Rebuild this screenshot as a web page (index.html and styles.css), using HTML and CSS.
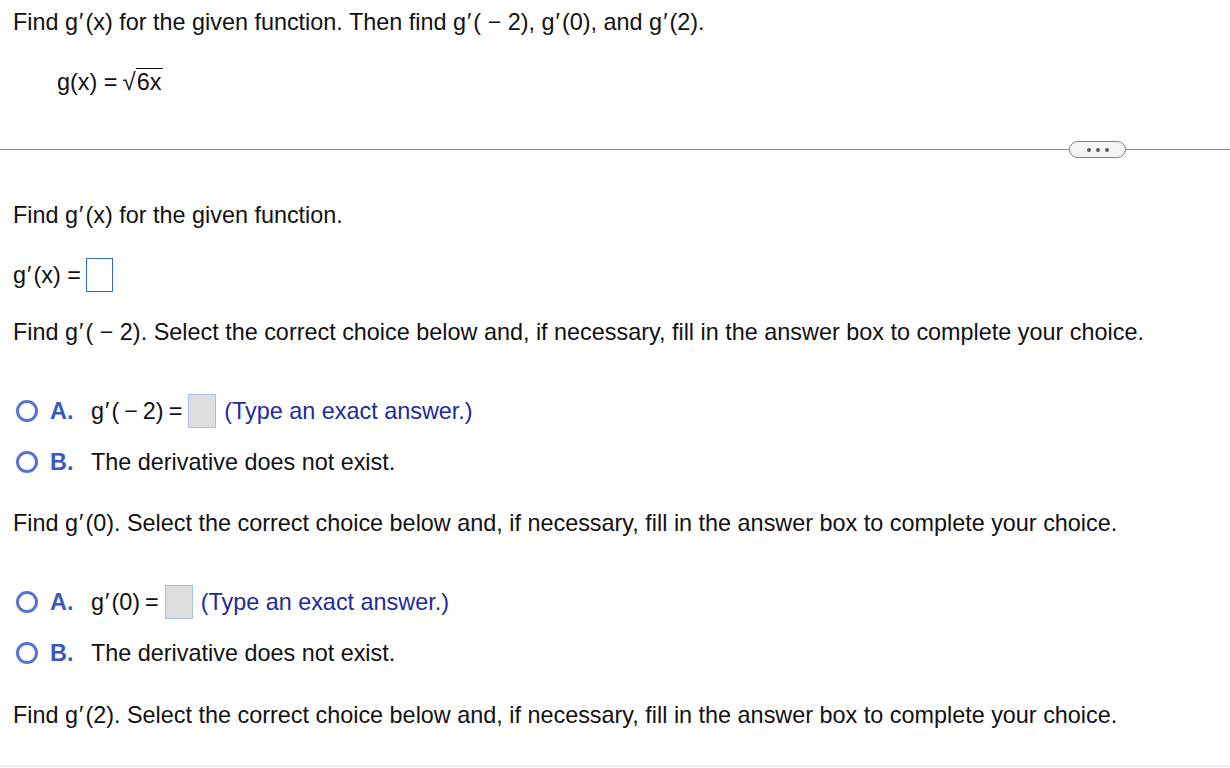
FILE: index.html
```html
<!DOCTYPE html>
<html>
<head>
<meta charset="utf-8">
<link rel="stylesheet" href="styles.css">
</head>
<body>
<div class="page">
  <section class="question">
    <p class="line intro">Find g<span class="pr">′</span>(x) for the given function. Then find g<span class="pr">′</span>( − 2), g<span class="pr">′</span>(0), and g<span class="pr">′</span>(2).</p>
    <p class="line formula">g(x) =<span class="radic">√</span><span class="radicand">6x</span></p>
  </section>
  <div class="divider"><span class="pill"><span class="dot"></span><span class="dot"></span><span class="dot"></span></span></div>
  <section class="answers">
    <p class="line p1">Find g<span class="pr">′</span>(x) for the given function.</p>
    <p class="line p2">g<span class="pr">′</span>(x) = <span class="box"></span></p>
    <p class="line p3">Find g<span class="pr">′</span>( − 2). Select the correct choice below and, if necessary, fill in the answer box to complete your choice.</p>
    <div class="choices">
      <div class="choice"><span class="radio"></span><span class="lbl">A.</span><span class="ctext"><span class="math">g<span class="pr">′</span>( − 2) =</span><span class="gbox"></span><span class="hint">(Type an exact answer.)</span></span></div>
      <div class="choice"><span class="radio"></span><span class="lbl">B.</span><span class="ctext">The derivative does not exist.</span></div>
    </div>
    <p class="line p4">Find g<span class="pr">′</span>(0). Select the correct choice below and, if necessary, fill in the answer box to complete your choice.</p>
    <div class="choices">
      <div class="choice"><span class="radio"></span><span class="lbl">A.</span><span class="ctext"><span class="math">g<span class="pr">′</span>(0) =</span><span class="gbox"></span><span class="hint">(Type an exact answer.)</span></span></div>
      <div class="choice"><span class="radio"></span><span class="lbl">B.</span><span class="ctext">The derivative does not exist.</span></div>
    </div>
    <p class="line p5">Find g<span class="pr">′</span>(2). Select the correct choice below and, if necessary, fill in the answer box to complete your choice.</p>
  </section>
  <div class="bottomline"></div>
</div>
</body>
</html>
```
FILE: styles.css
```css
html, body { margin: 0; padding: 0; background: #fff; }
body { font-family: "Liberation Sans", Arial, sans-serif; font-size: 23.4px; color: #111; }
.page { width: 1230px; height: 768px; position: relative; overflow: hidden; }
p { margin: 0; }
.line { line-height: 28px; }
.pr { display: inline-block; margin: 0 2px 0 1px; }
.question { padding: 8px 0 0 13px; }
.formula { margin: 32px 0 0 44px; }
.radic { font-size: 24px; margin-left: 5px; }
.radicand { border-top: 1.5px solid #111; padding: 0 2px 0 1px; }
.divider { margin-top: 53px; height: 1px; background: #8a8f99; position: relative; }
.pill { position: absolute; left: 1069px; top: -8px; width: 55px; height: 15px; border: 1px solid #7a808c; border-radius: 9px; background: #f4f5f7; display: flex; align-items: center; justify-content: center; gap: 5px; }
.dot { width: 4px; height: 4px; border-radius: 50%; background: #555b66; }
.answers { padding: 51px 0 0 13px; }
.p2 { margin-top: 29px; display: flex; align-items: center; height: 34px; }
.box { display: inline-block; width: 25px; height: 32px; border: 1.5px solid #2f6bd3; margin-left: 5px; }
.p3 { margin-top: 26px; }
.choices { padding-top: 48px; display: flex; flex-direction: column; gap: 17px; }
.choice { display: flex; align-items: center; height: 34px; }
.radio { width: 16px; height: 16px; border: 3px solid #5673d4; border-radius: 50%; margin-left: 3px; box-shadow: 0 0 1px #c8d3f2; }
.lbl { color: #3a57c4; font-weight: bold; margin-left: 12px; width: 41px; }
.ctext { display: flex; align-items: center; white-space: pre; }
.math { word-spacing: -1.5px; }
.gbox { display: inline-block; width: 26px; height: 32px; background: #dedede; border: 1px solid #a6c0ea; margin: 0 8px 0 6px; }
.hint { color: #1f2a9a; }
.p4 { margin-top: 30px; }
.p5 { margin-top: 31px; }
.bottomline { position: absolute; left: 0; right: 0; top: 765px; height: 2px; background: #ededed; }
```
